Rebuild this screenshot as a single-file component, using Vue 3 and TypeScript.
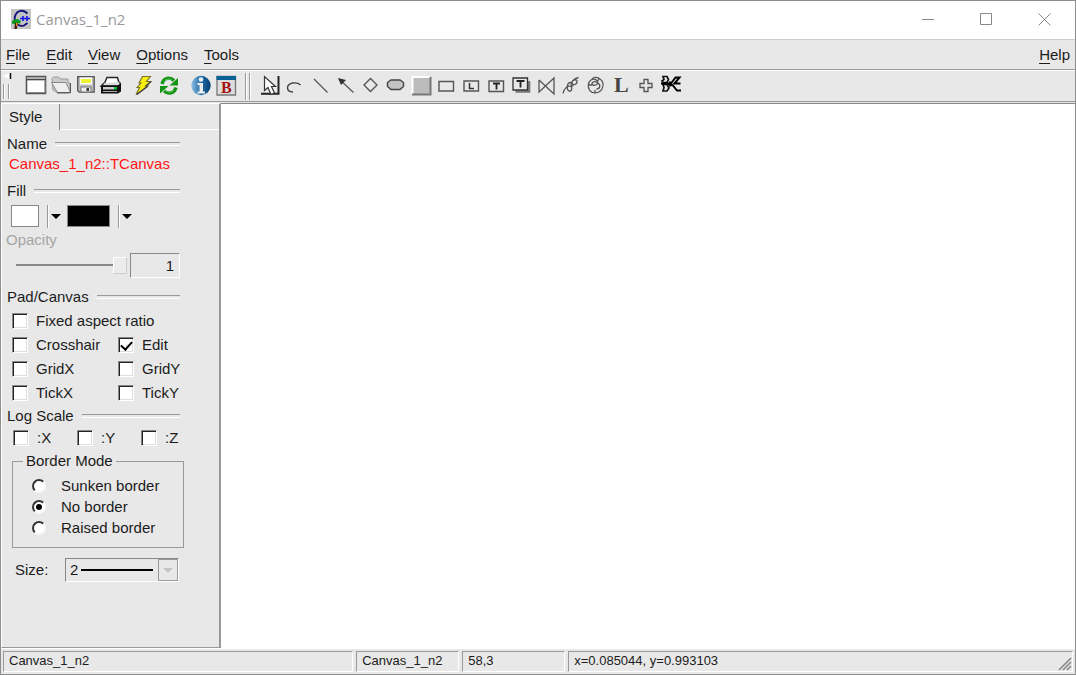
<script setup lang="ts">
import { ref } from 'vue'

interface Check { id: string; label: string; on: boolean; wide?: boolean }

const menus = ['File', 'Edit', 'View', 'Options', 'Tools']
const padChecks = ref<Check[]>([
  { id: 'fixed', label: 'Fixed aspect ratio', on: false, wide: true },
  { id: 'cross', label: 'Crosshair', on: false },
  { id: 'edit', label: 'Edit', on: true },
  { id: 'gridx', label: 'GridX', on: false },
  { id: 'gridy', label: 'GridY', on: false },
  { id: 'tickx', label: 'TickX', on: false },
  { id: 'ticky', label: 'TickY', on: false },
])
const logChecks = ref<Check[]>([
  { id: 'logx', label: ':X', on: false },
  { id: 'logy', label: ':Y', on: false },
  { id: 'logz', label: ':Z', on: false },
])
const borderModes = ['Sunken border', 'No border', 'Raised border']
const borderMode = ref('No border')
const opacity = ref('1')
const size = ref('2')
const status = ['Canvas_1_n2', 'Canvas_1_n2', '58,3', 'x=0.085044, y=0.993103']
</script>

<template>
  <div class="window">
    <header class="titlebar">
      <svg class="logo" width="20" height="20" viewBox="0 0 20 20">
        <rect width="20" height="20" fill="#c3c3c3" />
        <path d="M16.500 4.500C14 2 11 1.200 8.500 2.200C4.500 3.500 3 8 4 11.500C5 15.500 9 18 13 16.500L16.500 14" fill="none" stroke="#10107c" stroke-width="1.800" />
        <path d="M9 9.500h10M12 7v5M16 7v5" stroke="#1818e8" stroke-width="1.700" />
        <path d="M1 12l2-1 2-1 3 .5 2 2-1 2-3-.5-2 1.500-3-1z" fill="#0a9a1a" />
        <path d="M5.500 14l-1 6" stroke="#401808" stroke-width="2.500" />
        <path d="M5 14h1.500v3H5z" fill="#f08020" />
      </svg>
      <span class="title">Canvas_1_n2</span>
      <button class="winbtn" aria-label="Minimize"><svg width="13" height="13" viewBox="0 0 13 13"><path d="M0 6.500h12" /></svg></button>
      <button class="winbtn" aria-label="Maximize"><svg width="13" height="13" viewBox="0 0 13 13"><path d="M.5.5h11v11H.5z" /></svg></button>
      <button class="winbtn" aria-label="Close"><svg width="13" height="13" viewBox="0 0 13 13"><path d="M.5.5l12 12M12.500.5l-12 12" /></svg></button>
    </header>

    <nav class="menubar">
      <button v-for="m in menus" :key="m"><u>{{ m[0] }}</u>{{ m.slice(1) }}</button>
      <button class="help"><u>H</u>elp</button>
    </nav>

    <div class="toolbar">
      <svg class="handle" width="10" height="28" viewBox="0 0 10 28">
        <path d="M7 1v6L1 4z" fill="#fff" /><path d="M8.500 1v6" stroke="#111" stroke-width="1.500" />
        <path d="M1.500 12v15M6.500 12v15" stroke="#999" /><path d="M2.500 12v15M7.500 12v15" stroke="#fff" />
      </svg>
      <div class="group">
        <button aria-label="New canvas"><svg viewBox="0 0 25 25">
          <path d="M2.500 3.500h19v17h-19z" fill="#fff" stroke="#555" stroke-width="1.600" />
          <path d="M3.500 5h17" stroke="#999" stroke-width="1.500" /><path d="M3 6.700h18" stroke="#333" stroke-width="1.200" /><path d="M3.500 19.500h17.500V7" stroke="#888" fill="none" />
        </svg></button>
        <button aria-label="Open"><svg viewBox="0 0 25 25">
          <path d="M4 17L3 5.500l1.500-1.500h5l1.500 2h8v3l2 1v8l-1.500 2H9z" fill="#ccc" stroke="#999" />
          <path d="M2.500 9.500h14.500l4.500 10H8.500z" fill="#eee" stroke="#888" /><path d="M8 19.800h13.500V10" stroke="#555" fill="none" />
        </svg></button>
        <button aria-label="Save"><svg viewBox="0 0 25 25">
          <path d="M3.700 3.700h16.500v15.500h-15l-1.500-1.500z" fill="#bbb" stroke="#555" stroke-width="1.300" />
          <path d="M6 4.500h12v7H6z" fill="#fff" /><path d="M7 6h10v4H7z" fill="#f0f032" /><path d="M7 14h10v5H7z" fill="#eee" stroke="#777" /><path d="M12.500 15h2.500v3h-2.500z" fill="#333" />
        </svg></button>
        <button aria-label="Print"><svg viewBox="0 0 25 25">
          <path d="M8 4.500h10.500l2 7H5z" fill="#fff" stroke="#222" stroke-width="1.400" /><path d="M5 10l-3 3h17l2.500-2-1-2" fill="#ddd" stroke="#222" stroke-width="1.300" />
          <path d="M2 12.500h17l3-2v8l-3 2H2z" fill="#111" /><path d="M4 14h11v2.500H4z" fill="#ccc" /><path d="M15 14h3v2.500h-3z" fill="#00cf30" /><path d="M4 18.500h14" stroke="#aaa" />
        </svg></button>
      </div>
      <div class="group">
        <button aria-label="Interrupt"><svg viewBox="0 0 25 25">
          <path d="M11.500 3.500h8l-4 5h4.500L14.500 13h2.500L5 21.500l3.500-7H6l4-4.500H8z" fill="#f8f10c" stroke="#77702e" stroke-width="1.100" /><path d="M20 8.500l-5 4.500M16.500 13.500L6 21.500" stroke="#444" stroke-width="1.200" />
        </svg></button>
        <button aria-label="Refresh"><svg viewBox="0 0 25 25">
          <path d="M6 11C7.500 4.500 14 3.500 18 7.500" fill="none" stroke="#149414" stroke-width="3.400" /><path d="M22 5v7.500h-8.500z" fill="#149414" />
          <path d="M20 14.500C18.500 20.500 12 21.500 8 18" fill="none" stroke="#149414" stroke-width="3.400" /><path d="M4 20.500V13h8.500z" fill="#149414" />
          <path d="M8 8.500C10.500 5.500 14 5.500 16 7M18 17C15.500 19.500 12 19.500 9.500 18" fill="none" stroke="#5bc65b" />
        </svg></button>
      </div>
      <div class="group">
        <button aria-label="Inspect"><svg viewBox="0 0 25 25">
          <defs><linearGradient id="ball" x1="0" x2="1"><stop stop-color="#8dbde0" /><stop offset=".45" stop-color="#2874ad" /><stop offset="1" stop-color="#063e72" /></linearGradient></defs>
          <circle cx="13" cy="12.500" r="9.700" fill="url(#ball)" /><circle cx="13" cy="6.500" r="2.300" fill="#eee" /><path d="M9.500 10h5.500v8.500h2v2H9.500v-2h2v-6.500h-2z" fill="#eee" />
        </svg></button>
        <button aria-label="Browser"><svg viewBox="0 0 25 25">
          <path d="M4 3.500h18.500v18.500H4z" fill="#ddd" stroke="#777" stroke-width="1.300" /><path d="M3.500 3h19.500v4H3.500z" fill="#086298" /><text x="8" y="20" class="serif red">B</text>
        </svg></button>
      </div>
      <span class="grip"></span>
      <div class="group tools">
        <button aria-label="Pointer"><svg viewBox="0 0 25 25">
          <path d="M3 20.700h18.500M20.500 3v18" stroke="#222" stroke-width="2" fill="none" /><path d="M6.500 3.500v14l3.500-3 3 7 3.500-1.500-3-6.500h4z" fill="#fff" stroke="#333" stroke-width="1.200" />
        </svg></button>
        <button aria-label="Arc"><svg viewBox="0 0 25 25"><path d="M17.500 12C14 8.500 5 9.500 4.500 14.500C4.500 17.500 6 19 10 19" fill="none" stroke="#444" stroke-width="1.400" /></svg></button>
        <button aria-label="Line"><svg viewBox="0 0 25 25"><path d="M6 6l13.500 13.500" stroke="#555" stroke-width="1.200" /></svg></button>
        <button aria-label="Arrow"><svg viewBox="0 0 25 25"><path d="M6 6l14.500 13.500" stroke="#555" stroke-width="1.200" /><path d="M5 5l8 2-5 5z" fill="#333" /></svg></button>
        <button aria-label="Diamond"><svg viewBox="0 0 25 25"><path d="M12.500 5.500l6.500 6.500-6.500 6.500L6 12z" fill="none" stroke="#555" stroke-width="1.400" /></svg></button>
        <button aria-label="Ellipse"><svg viewBox="0 0 25 25"><path d="M8 7h9l3.500 2.500v4L17 16.500H8l-3.500-3v-4z" fill="#c4c4c4" stroke="#444" stroke-width="1.400" /></svg></button>
        <button aria-label="Pad"><svg viewBox="0 0 25 25"><path d="M4 3h19v19H4z" fill="#bcbcbc" /><path d="M4.500 21V4H22" fill="none" stroke="#fff" stroke-width="2" /><path d="M4 21.500h18.500V4" fill="none" stroke="#777" stroke-width="2" /></svg></button>
        <button aria-label="Pave"><svg viewBox="0 0 25 25"><path d="M6 8.500h14.500v9.500H6z" fill="none" stroke="#555" stroke-width="1.400" /></svg></button>
        <button aria-label="Pave label"><svg viewBox="0 0 25 25"><path d="M6 8h14.500v10H6z" fill="none" stroke="#555" stroke-width="1.400" /><path d="M11.500 10v5.500h4.500" stroke="#333" stroke-width="1.500" fill="none" /></svg></button>
        <button aria-label="Pave text"><svg viewBox="0 0 25 25"><path d="M6 8h14.500v10.500H6z" fill="none" stroke="#555" stroke-width="1.400" /><path d="M10 10.500h7M13.500 10.500v6" stroke="#222" stroke-width="1.800" /></svg></button>
        <button aria-label="Paves text"><svg viewBox="0 0 25 25"><path d="M7.500 18.500h13.500V8" stroke="#777" stroke-width="2.600" fill="none" /><path d="M5 5h14.500v12H5z" fill="#e8e8e8" stroke="#333" stroke-width="1.300" /><path d="M8.500 8h8M12.500 8v6.500" stroke="#222" stroke-width="1.800" /></svg></button>
        <button aria-label="Polyline"><svg viewBox="0 0 25 25"><path d="M6 7v12L21 5v16L6 7" fill="none" stroke="#555" stroke-width="1.300" /></svg></button>
        <button aria-label="Curly line"><svg viewBox="0 0 25 25"><path d="M5 20.500C6 15 10 12 13 13.500C15 15.500 13 19 11 18C8 16 9 9 13 9.500C16 10.500 15 14 13.500 13C12 10 15 6 20.500 4.500M13.500 10C15 6 19 6 19 8.500C19 12 14 13 14 9.500" fill="none" stroke="#555" stroke-width="1.300" /></svg></button>
        <button aria-label="Curly arc"><svg viewBox="0 0 25 25"><path d="M9 6C11 3.500 15 4 17 6C20 8 21 12 19 16C16 21 9 21 6.500 17C4.500 14 5 9 8 7C11 5 15 7 14.500 10C14 13 9 13 9 10.500C9.500 8 13 8 15 10C18 12 17 16 13.500 16M5 12H9M12 20V17M16 6L14 9" fill="none" stroke="#555" stroke-width="1.300" /></svg></button>
        <button aria-label="Latex"><svg viewBox="0 0 25 25"><text x="6" y="19" class="serif big">L</text></svg></button>
        <button aria-label="Marker"><svg viewBox="0 0 25 25"><path d="M11 6.500h4v4h4v4h-4v4h-4v-4H7v-4h4z" fill="none" stroke="#555" stroke-width="1.300" /></svg></button>
        <button aria-label="Cut"><svg viewBox="0 0 25 25">
          <path d="M5 3.500h4l1.500 3-1.500 3H5l-1-1.500 2-1.500zM5 18h4l2-3-2-3.500H5l1 3z" fill="none" stroke="#111" stroke-width="1.700" />
          <path d="M3 10.500h10l4.500-6h4l-5 6h6M10 11l5 1.500 4 5h4M12 8.500v5" fill="none" stroke="#000" stroke-width="2" />
        </svg></button>
      </div>
    </div>

    <main class="body">
      <aside class="side">
        <div class="tabs"><button class="tab">Style</button><span class="tabfill"></span></div>
        <div class="panel">
          <h2 class="head">Name</h2>
          <p class="objname">Canvas_1_n2::TCanvas</p>
          <h2 class="head fill">Fill</h2>
          <div class="colours">
            <button class="swatch" aria-label="Fill colour"></button>
            <button class="drop" aria-label="Choose fill colour"></button>
            <button class="swatch pattern" aria-label="Fill pattern"></button>
            <button class="drop" aria-label="Choose fill pattern"></button>
          </div>
          <label class="opacity" for="opacity">Opacity</label>
          <div class="sliderrow">
            <input id="opacity" v-model="opacity" type="range" min="0" max="1" step="0.01" />
            <input v-model="opacity" class="entry" type="text" aria-label="Opacity value" />
          </div>
          <h2 class="head pad">Pad/Canvas</h2>
          <div class="checks">
            <label v-for="c in padChecks" :key="c.id" :for="c.id" :class="{ wide: c.wide }">
              <input :id="c.id" v-model="c.on" type="checkbox" />{{ c.label }}
            </label>
          </div>
          <h2 class="head">Log Scale</h2>
          <div class="logs">
            <label v-for="c in logChecks" :key="c.id" :for="c.id"><input :id="c.id" v-model="c.on" type="checkbox" />{{ c.label }}</label>
          </div>
          <fieldset class="modes">
            <legend>Border Mode</legend>
            <label v-for="m in borderModes" :key="m"><input v-model="borderMode" type="radio" name="border" :value="m" />{{ m }}</label>
          </fieldset>
          <div class="sizerow">
            <label for="size">Size:</label>
            <div class="combo">
              <select id="size" v-model="size"><option>1</option><option>2</option><option>3</option></select>
              <span class="sample"></span>
              <span class="arrowbox"></span>
            </div>
          </div>
        </div>
      </aside>
      <section class="canvas" aria-label="Canvas"></section>
    </main>

    <footer class="statusbar">
      <span v-for="(s, i) in status" :key="i">{{ s }}</span>
      <svg class="resize" width="14" height="14" viewBox="0 0 14 14"><path d="M1 13L13 1M5 13l8-8M9 13l4-4" stroke="#888" stroke-width="1.600" /></svg>
    </footer>
  </div>
</template>

<style>
body { background: #e8e8e8; }
</style>

<style scoped>
* { box-sizing: border-box; }
.window {
  min-height: 100vh; display: flex; flex-direction: column; background: #e8e8e8;
  border: 1px solid #8d8d8d; color: #1c1c1c;
  font: 15px/20px "Liberation Sans", Arial, sans-serif;
}
button { font: inherit; color: inherit; background: none; border: 0; padding: 0; }
.titlebar { height: 39px; display: flex; align-items: center; background: #fff; border-bottom: 1px solid #ccc; padding: 0 2px 2px 10px; }
.title { flex: 1; margin-left: 5px; color: #999; font: 15px/20px "Open Sans", "Noto Sans", sans-serif; }
.winbtn { width: 58px; height: 36px; display: grid; place-items: center; }
.winbtn path { fill: none; stroke: #888; }
.menubar { height: 30px; display: flex; gap: 16px; padding: 0 5px; border-bottom: 1px solid #999; }
.menubar u { text-underline-offset: 3px; }
.help { margin-left: auto; }

.toolbar { height: 32px; display: flex; align-items: center; border-top: 1px solid #fff; border-bottom: 1px solid #999; }
.handle { margin: 0 12px 0 1px; }
.group { display: flex; margin-right: 7px; padding-bottom: 2px; }
.group button { width: 25px; height: 25px; }
.group svg { display: block; width: 25px; height: 25px; }
.grip { width: 5px; height: 27px; border: solid #999; border-width: 0 1px; box-shadow: 1px 0 #fff, inset 1px 0 #fff; margin-right: 8px; }
.serif { font-family: "Liberation Serif", serif; font-weight: bold; font-size: 16px; fill: #444; }
.serif.red { fill: #a31313; }
.serif.big { font-size: 22px; }

.body { flex: 1; display: flex; }
.side { width: 220px; flex: none; border-right: 2px solid #999; border-bottom: 1px solid #999; margin-top: 1px; border-top: 1px solid #fff; border-left: 1px solid #fff; }
.canvas { flex: 1; background: #fff; border-top: 1px solid #888; margin-top: 1px; }
.tabs { display: flex; height: 26px; }
.tab { width: 58px; border-right: 1px solid #888; text-align: left; padding: 0 0 1px 7px; }
.tabfill { flex: 1; border-bottom: 1px solid #fff; }
.panel { padding: 4px 39px 0 5px; }
.head { display: flex; align-items: center; gap: 8px; margin: 0; font: inherit; }
.head::after { content: ""; flex: 1; height: 2px; border-top: 1px solid #999; border-bottom: 1px solid #fff; }
.objname { margin: 0; padding-left: 2px; color: #ff1616; white-space: nowrap; }
.head.fill { margin-top: 7px; }
.colours { display: flex; align-items: center; height: 24px; margin-top: 3px; padding-left: 4px; }
.swatch { width: 28px; height: 22px; background: #fff; border: 1px solid #888; }
.swatch.pattern { width: 43px; background: #000; margin-left: 6px; }
.drop { width: 14px; height: 23px; margin-left: 8px; border-left: 1px solid #999; box-shadow: inset 1px 0 #fff; display: grid; place-items: center end; }
.drop::after { content: ""; border: 5px solid transparent; border-top-color: #000; border-bottom: 0; }
.opacity { display: block; margin: 2px 0 0 -1px; color: #a5a5a5; }
.sliderrow { display: flex; align-items: center; height: 24px; margin: 3px 0 0 8px; }
.sliderrow input[type="range"] { appearance: none; flex: 1; min-width: 0; height: 18px; margin: 0 3px 0 0; background: linear-gradient(#888, #888) 1px 8px / 98px 2px no-repeat; }
input[type="range"]::-webkit-slider-thumb { appearance: none; width: 14px; height: 17px; background: #ececec; border: 1px solid #fff; border-right-color: #ccc; border-bottom-color: #ccc; }
.entry { width: 50px; height: 25px; padding: 0 5px; border: 1px solid #fff; border-top-color: #888; border-left-color: #888; background: #e8e8e8; color: inherit; font: inherit; text-align: right; }
.head.pad { margin-top: 10px; }
label { display: flex; align-items: center; white-space: nowrap; }
.checks { display: grid; grid-template-columns: 106px 1fr; grid-auto-rows: 24px; margin: 2px 0 0 5px; }
.checks + .head { margin-top: 1px; }
.wide { grid-column: 1 / -1; }
input[type="checkbox"] { appearance: none; width: 16px; height: 16px; margin: 0 8px 0 0; background: #fff; border: 1px solid #fff; border-top-color: #888; border-left-color: #888; box-shadow: inset 1px 1px #222, inset -1px -1px #ddd; }
input[type="checkbox"]:checked { display: grid; place-items: start center; }
input[type="checkbox"]:checked::after { content: ""; width: 9px; height: 5px; margin-top: 3px; border: solid #000; border-width: 0 0 2px 2px; rotate: -48deg; }
.logs { display: grid; grid-template-columns: 64px 64px 1fr; height: 20px; margin: 2px 0 0 6px; }
.modes { margin: 3px -4px 0 5px; padding: 4px 0 9px 19px; border: 1px solid #999; min-width: 0; }
.modes legend { margin-left: -9px; padding: 0 3px; }
.modes label { height: 21px; }
input[type="radio"] { appearance: none; width: 14px; height: 14px; margin: 0 15px 0 0; border-radius: 50%; background: #fff; border: 2px solid #333; border-right-color: #f8f8f8; border-bottom-color: #f8f8f8; display: grid; place-items: center; }
input[type="radio"]:checked::after { content: ""; width: 6px; height: 6px; border-radius: 50%; background: #000; }
.sizerow { display: flex; align-items: center; justify-content: space-between; margin: 10px 1px 0 8px; }
.combo { position: relative; width: 114px; height: 24px; }
.combo select { appearance: none; width: 100%; height: 100%; padding: 0 4px; border: 1px solid #fff; border-top-color: #888; border-left-color: #888; border-radius: 0; background: #e8e8e8; color: inherit; font: inherit; }
.sample { position: absolute; left: 16px; right: 26px; top: 11px; height: 2px; background: #000; pointer-events: none; }
.arrowbox { position: absolute; right: 1px; top: 1px; bottom: 1px; width: 20px; border: 1px solid #999; display: grid; place-items: center; pointer-events: none; }
.arrowbox::after { content: ""; border: 5px solid transparent; border-top-color: #c4c4c4; border-bottom: 0; }

.statusbar { position: relative; display: grid; grid-template-columns: 34fr 10fr 10fr 49fr; gap: 3px; padding: 2px; border-top: 1px solid #fff; font-size: 13px; line-height: 18px; }
.statusbar span { height: 21px; padding: 0 5px; border: 1px solid #fff; border-top-color: #999; border-left-color: #999; }
.resize { position: absolute; right: 3px; bottom: 3px; }
</style>
